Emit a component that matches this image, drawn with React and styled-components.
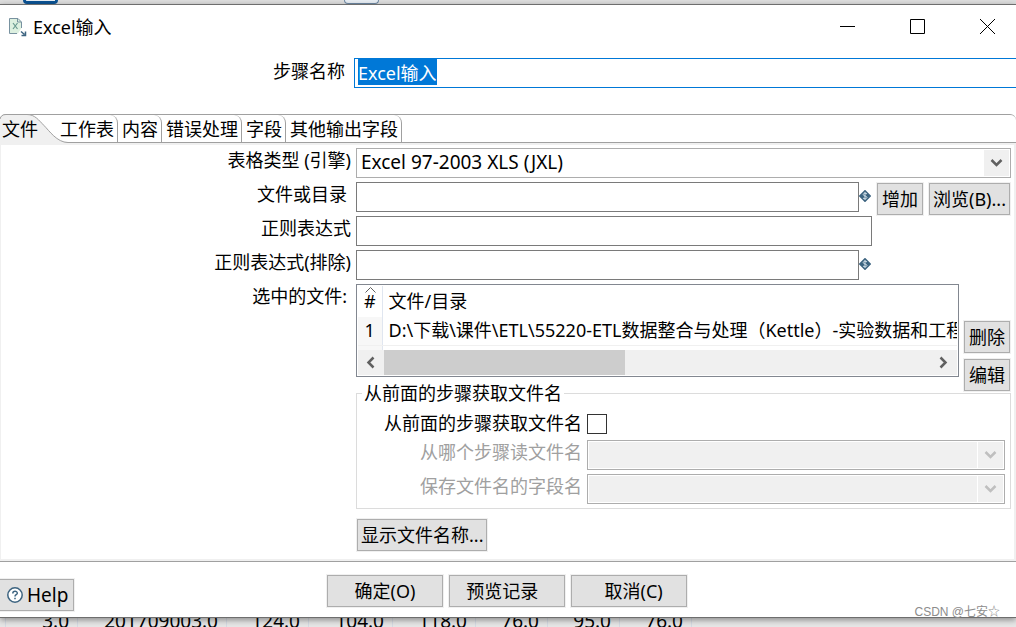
import { useEffect, useRef, useState } from 'react';
import styled, { createGlobalStyle, css } from 'styled-components';

const colors = {
    white: '#FFFFFF',
    text: '#000000',
    face: '#E1E1E1',
    faceBorder: '#ADADAD',
    light: '#F0F0F0',
    line: '#A0A0A0',
    inputBorder: '#7A7A7A',
    accent: '#0078D7',
    disabled: '#A0A0A0',
    steel: '#3D6480'
}

const GlobalStyle = createGlobalStyle`
    * {
        box-sizing: border-box;
    }
    body {
        margin: 0;
        overflow: hidden;
        background: #E6E6E6;
    }
    body, button, input, select {
        font-family: "Noto Sans", "Noto Sans CJK SC", sans-serif;
        font-size: 18px;
        color: ${colors.text};
    }
`;

const Backdrop = styled.div`
    display: flex;
    height: 4px;
    padding-left: 23px;
    gap: 286px;
    overflow: hidden;
    background: #DEDEDE;
`;

const ToolEdge = styled.span`
    width: 35px;
    height: 4px;
    border: ${({ $active }) => $active ? '3px solid #0B5394' : '1px solid #6F8AA5'};
    border-top: 0;
    border-radius: 0 0 5px 5px;
    background: #E8EEF4;
`;

const Window = styled.main`
    position: relative;
    z-index: 1;
    background: ${colors.white};
    border-top: 1px solid #6E6E6E;
    border-bottom: 1px solid #6E6E6E;
    box-shadow: 0 2px 6px rgba(0, 0, 0, 0.4);
`;

const TitleBar = styled.header`
    display: flex;
    align-items: center;
    height: 43px;
    padding-left: 8px;
    h1 {
        flex: 1;
        margin: 0 0 2px 6px;
        font-size: 18px;
        font-weight: 400;
    }
`;

const WindowButton = styled.button`
    display: flex;
    align-items: center;
    justify-content: center;
    width: 70px;
    height: 43px;
    padding: 0;
    border: 0;
    background: none;
    &:last-child {
        margin-right: -6px;
    }
`;

const Row = styled.div`
    display: flex;
    align-items: flex-start;
    height: ${({ $height }) => $height || 30}px;
`;

const Label = styled.label`
    flex: none;
    width: ${({ $width }) => $width || 355}px;
    padding-right: ${({ $trail }) => $trail ? 9 : 5}px;
    text-align: right;
    line-height: 24px;
    white-space: nowrap;
    color: ${({ $muted }) => $muted ? colors.disabled : colors.text};
`;

const TextBox = styled.input`
    flex: 1;
    min-width: 0;
    height: 30px;
    padding: 0 3px 2px;
    border: 1px solid ${colors.inputBorder};
    border-radius: 0;
    outline: none;
    background: ${colors.white};
`;

const StepRow = styled(Row)`
    margin: 10px 0 26px;
    ${Label} {
        width: 354px;
        padding-right: 9px;
        line-height: 26px;
    }
    ${TextBox} {
        border-color: ${colors.accent};
        border-right: 0;
        line-height: 24px;
        &::selection {
            color: ${colors.white};
            background: ${colors.accent};
        }
    }
`;

const TabBar = styled.div`
    display: flex;
    height: 29px;
    border: 1px solid ${colors.line};
    border-left: 0;
    border-right: 0;
    border-radius: 6px 6px 0 0;
`;

const Tab = styled.button`
    position: relative;
    padding: 1px 4px 0 4px;
    border: 0;
    border-right: 1px solid ${colors.line};
    border-top-right-radius: 8px;
    background: none;
    line-height: 26px;
    white-space: nowrap;
    &:not(:first-child) {
        padding-right: 3px;
    }
    ${({ $selected }) => $selected && css`
        width: 56px;
        padding: 1px 0 0 2px;
        border: 0;
        text-align: left;
    `}
    svg {
        position: absolute;
        top: -1px;
        left: 0;
    }
    span {
        position: relative;
    }
`;

const Panel = styled.section`
    display: flex;
    flex-direction: column;
    gap: 4px;
    padding: 3px 3px 8px 0;
    border: 2px solid ${colors.light};
    border-left-width: 1px;
`;

const SelectWrap = styled.div`
    position: relative;
    flex: 1;
    min-width: 0;
    select {
        display: block;
        width: 100%;
        height: 30px;
        padding: 0 30px 2px 4px;
        border: 1px solid ${colors.faceBorder};
        border-radius: 0;
        appearance: none;
        background: ${colors.white};
        box-shadow: inset 0 0 0 1px ${colors.white};
        font-size: 19px;
    }
    select:disabled {
        background: ${colors.light};
        opacity: 1;
    }
    span {
        position: absolute;
        top: 2px;
        right: 2px;
        bottom: 2px;
        width: 25px;
        display: flex;
        align-items: center;
        justify-content: center;
        background: ${colors.light};
        pointer-events: none;
    }
    select:disabled + span {
        width: 26px;
        border-left: 1px solid ${colors.white};
    }
`;

const Button = styled.button`
    flex: none;
    height: 32px;
    min-width: ${({ $wide }) => $wide ? 116 : 46}px;
    padding: 0 3px;
    border: 1px solid ${colors.faceBorder};
    background: ${colors.face};
    box-shadow: 0 0 0 1px ${colors.light};
    line-height: 28px;
    white-space: nowrap;
`;

const RowEnd = styled.div`
    flex: none;
    display: flex;
    gap: 6px;
    width: ${({ $width }) => $width}px;
    padding-top: 1px;
    > svg {
        flex: none;
        margin-top: 7px;
    }
`;

const FileBox = styled.div`
    flex: 1;
    min-width: 0;
    height: 93px;
    padding: 1px;
    overflow: hidden;
    border: 1px solid #828790;
`;

const TableView = styled.div`
    height: 64px;
    overflow: hidden;
    table {
        width: 1100px;
        border-collapse: collapse;
        table-layout: fixed;
    }
    th, td {
        padding: 0 0 0 6px;
        text-align: left;
        font-weight: 400;
        line-height: 27px;
        white-space: nowrap;
    }
    th {
        height: 31px;
    }
    td {
        height: 28px;
        border-bottom: 1px solid ${colors.light};
    }
    th:first-child, td:first-child {
        position: relative;
        width: 24px;
        padding-left: 0;
        text-align: center;
        border-right: 1px solid #E0E6F0;
    }
    td:first-child {
        background: #F7F7F7;
    }
    th svg {
        position: absolute;
        top: 1px;
        left: 7px;
    }
`;

const ScrollBar = styled.div`
    display: flex;
    height: 25px;
    background: ${colors.light};
    button {
        width: 26px;
        padding: 0 2px 0 0;
        border: 0;
        background: none;
    }
    button svg {
        display: block;
        margin: 0 auto;
    }
    div {
        flex: 1;
    }
    div span {
        display: block;
        width: 44%;
        height: 100%;
        background: #CDCDCD;
    }
`;

const SideButtons = styled.div`
    flex: none;
    display: flex;
    flex-direction: column;
    gap: 6px;
    padding: 37px 1px 0 5px;
`;

const Group = styled.fieldset`
    display: flex;
    flex-direction: column;
    gap: 4px;
    min-width: 0;
    margin: 1px 0 0 355px;
    padding: 6px 5px 4px 0;
    border: 1px solid #DCDCDC;
    legend {
        margin-left: 5px;
        padding: 0 2px;
        line-height: 22px;
    }
`;

const CheckRow = styled(Row)`
    height: 26px;
    ${Label} {
        line-height: 26px;
    }
`;

const CheckBox = styled.input`
    width: 20px;
    height: 20px;
    margin: 4px 0 0;
    border: 1px solid #333333;
    appearance: none;
    background: ${colors.white};
    &:checked {
        background: ${colors.accent};
    }
`;

const ShowNames = styled.div`
    padding: 6px 0 0 356px;
`;

const Footer = styled.footer`
    display: grid;
    grid-template-columns: 1fr auto 1fr;
    align-items: start;
    padding: 13px 2px 6px 0;
    border-top: 1px solid ${colors.line};
`;

const FooterButtons = styled.div`
    display: flex;
    gap: 6px;
`;

const HelpButton = styled(Button)`
    display: flex;
    align-items: center;
    justify-self: start;
    gap: 4px;
    margin-top: 4px;
    padding: 0 5px 0 7px;
    border-left: 0;
    font-size: 19px;
`;

const Watermark = styled.small`
    position: absolute;
    right: 16px;
    bottom: -3px;
    font: 12px/16px "Liberation Sans", "Noto Sans CJK SC", sans-serif;
    color: #8C8C8C;
`;

const DataTable = styled.table`
    margin: -12px 0 0 5px;
    border-collapse: collapse;
    table-layout: fixed;
    width: 686px;
    td {
        padding: 0 8px 0 0;
        border: 1px solid #D5DAE3;
        text-align: right;
        font-size: 19px;
        line-height: 28px;
    }
`;

const tabs = ['文件', '工作表', '内容', '错误处理', '字段', '其他输出字段'];

const preview = [
    ['3.0', 72],
    ['201709003.0', 149],
    ['124.0', 82],
    ['104.0', 84],
    ['118.0', 83],
    ['76.0', 72],
    ['95.0', 72],
    ['76.0', 72]
];

const ExcelIcon = () => (
    <svg width="19" height="20" viewBox="0 0 19 20" fill="none">
        <path d="M2 1.500h8l3.500 3.500v6L10 16.500H2z" fill="#DDF0E0" />
        <path d="M13.500 11V5L10 1.500H1.500v15H9" stroke="#7892A0" />
        <path d="M9.500 1.500V5H13" stroke="#7892A0" />
        <path d="M5 6l4.500 6M9.500 6L5 12" stroke="#6A9A90" strokeWidth="1.200" />
        <path d="M13 14.500l3.500 3M17.500 14.500v4h-4" stroke="#3D6480" strokeWidth="1.500" />
    </svg>
)

const Chevron = ({ color = '#606060' }) => (
    <svg width="13" height="10" viewBox="0 0 13 10" fill="none">
        <path d="M1.5 2l5 5 5-5" stroke={color} strokeWidth="2.5" />
    </svg>
)

const Arrow = ({ right }) => (
    <svg width="11" height="13" viewBox="0 0 11 13" fill="none">
        <path d={right ? 'M2.5 1.5l5 5-5 5' : 'M8.5 1.5l-5 5 5 5'} stroke="#606060" strokeWidth="2.5" />
    </svg>
)

const VariableIcon = () => (
    <svg width="12" height="12" viewBox="0 0 12 12">
        <path d="M6 .8L11.200 6 6 11.200.8 6z" fill={colors.steel} stroke={colors.steel} strokeWidth="1.600" strokeLinejoin="round" />
        <path d="M8 4C7 2.800 4.200 3 4.200 4.600S8 5.800 8 7.400 5 9.200 4 8M6 2v8" fill="none" stroke="#D3E1EA" />
    </svg>
)

const HelpIcon = () => (
    <svg width="16" height="16" viewBox="0 0 16 16" fill="none" stroke={colors.steel}>
        <circle cx="8" cy="8" r="7.200" fill="#FFFFFF" strokeWidth="1.5" />
        <path d="M5.800 6.500c0-3 4.500-2.800 4.500-.3C10.300 7.800 8 7.700 8 9.500M8 10.800v1.500" strokeWidth="1.500" />
    </svg>
)

const Select = ({ id, disabled, children }) => (
    <SelectWrap>
        <select id={id} disabled={disabled}>{children}</select>
        <span><Chevron color={disabled ? '#BFBFBF' : '#606060'} /></span>
    </SelectWrap>
)

const App = () => {
    const [tab, setTab] = useState(0);
    const nameRef = useRef(null);

    useEffect(() => {
        nameRef.current.focus();
        nameRef.current.select();
    }, []);

    return (
        <>
            <GlobalStyle />
            <Backdrop>
                <ToolEdge $active />
                <ToolEdge />
            </Backdrop>
            <Window>
                <TitleBar>
                    <ExcelIcon />
                    <h1>Excel输入</h1>
                    <WindowButton aria-label="最小化">
                        <svg width="15" height="15"><path d="M0 7.500h15" stroke="#000" /></svg>
                    </WindowButton>
                    <WindowButton aria-label="最大化">
                        <svg width="15" height="15"><path d="M.5.5h14v14H.5z" fill="none" stroke="#000" /></svg>
                    </WindowButton>
                    <WindowButton aria-label="关闭">
                        <svg width="15" height="15"><path d="M0 0l15 15M15 0L0 15" stroke="#000" /></svg>
                    </WindowButton>
                </TitleBar>
                <StepRow>
                    <Label htmlFor="step">步骤名称</Label>
                    <TextBox id="step" ref={nameRef} defaultValue="Excel输入" />
                </StepRow>
                <TabBar role="tablist">
                    {tabs.map((name, i) => (
                        <Tab key={name} role="tab" aria-selected={tab === i} $selected={i === 0} onClick={() => setTab(i)}>
                            {i === 0 && (
                                <svg width="70" height="29" viewBox="0 0 70 29" fill="none">
                                    <path d="M0 29V5Q1 .5 6 .5h21c8 0 12 6 17 11s13 17 24 17v.5z" fill={colors.light} />
                                    <path d="M0 5Q1 .5 6 .5h21c8 0 12 6 17 11s13 17 24 17h2" stroke={colors.line} />
                                </svg>
                            )}
                            <span>{name}</span>
                        </Tab>
                    ))}
                </TabBar>
                <Panel>
                    <Row>
                        <Label htmlFor="engine">表格类型 (引擎)</Label>
                        <Select id="engine"><option>Excel 97-2003 XLS (JXL)</option></Select>
                    </Row>
                    <Row>
                        <Label htmlFor="path" $trail>文件或目录</Label>
                        <TextBox id="path" />
                        <RowEnd $width={152}>
                            <VariableIcon />
                            <Button>增加</Button>
                            <Button>浏览(B)...</Button>
                        </RowEnd>
                    </Row>
                    <Row>
                        <Label htmlFor="regex">正则表达式</Label>
                        <TextBox id="regex" />
                        <RowEnd $width={139} />
                    </Row>
                    <Row>
                        <Label htmlFor="exclude">正则表达式(排除)</Label>
                        <TextBox id="exclude" />
                        <RowEnd $width={152}>
                            <VariableIcon />
                        </RowEnd>
                    </Row>
                    <Row $height={93}>
                        <Label as="span" id="files" $trail>选中的文件:</Label>
                        <FileBox>
                            <TableView>
                                <table aria-labelledby="files">
                                    <thead>
                                        <tr>
                                            <th>
                                                <svg width="11" height="6"><path d="M.5 5.500l5-5 5 5" fill="none" stroke="#606060" /></svg>
                                                #
                                            </th>
                                            <th>文件/目录</th>
                                        </tr>
                                    </thead>
                                    <tbody>
                                        <tr>
                                            <td>1</td>
                                            <td>D:\下载\课件\ETL\55220-ETL数据整合与处理（Kettle）-实验数据和工程</td>
                                        </tr>
                                        <tr><td></td><td></td></tr>
                                    </tbody>
                                </table>
                            </TableView>
                            <ScrollBar>
                                <button aria-label="向左"><Arrow /></button>
                                <div><span /></div>
                                <button aria-label="向右"><Arrow right /></button>
                            </ScrollBar>
                        </FileBox>
                        <SideButtons>
                            <Button>删除</Button>
                            <Button>编辑</Button>
                        </SideButtons>
                    </Row>
                    <Group>
                        <legend>从前面的步骤获取文件名</legend>
                        <CheckRow>
                            <Label htmlFor="accept" $width={230}>从前面的步骤获取文件名</Label>
                            <CheckBox id="accept" type="checkbox" />
                        </CheckRow>
                        <Row>
                            <Label htmlFor="from" $width={230} $muted>从哪个步骤读文件名</Label>
                            <Select id="from" disabled />
                        </Row>
                        <Row>
                            <Label htmlFor="field" $width={230} $muted>保存文件名的字段名</Label>
                            <Select id="field" disabled />
                        </Row>
                    </Group>
                    <ShowNames>
                        <Button>显示文件名称...</Button>
                    </ShowNames>
                </Panel>
                <Footer>
                    <HelpButton><HelpIcon />Help</HelpButton>
                    <FooterButtons>
                        <Button $wide>确定(O)</Button>
                        <Button $wide>预览记录{'\u00a0\u00a0'}</Button>
                        <Button $wide>{'\u00a0\u00a0'}取消(C)</Button>
                    </FooterButtons>
                </Footer>
                <Watermark>CSDN @七安☆</Watermark>
            </Window>
            <DataTable>
                <colgroup>
                    {preview.map(([, width], i) => <col key={i} style={{ width }} />)}
                </colgroup>
                <tbody>
                    <tr>
                        {preview.map(([value], i) => <td key={i}>{value}</td>)}
                    </tr>
                </tbody>
            </DataTable>
        </>
    )
}

export default App;
